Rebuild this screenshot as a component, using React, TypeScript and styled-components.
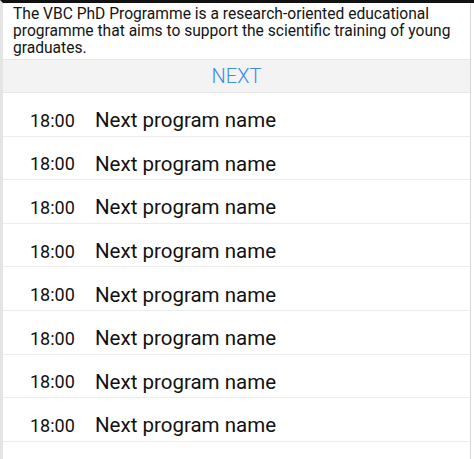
import React from "react";
import styled, { createGlobalStyle } from "styled-components";

const Global = createGlobalStyle`
  html, body { margin: 0; padding: 0; background: #ffffff; }
  body { font-family: Roboto, "Noto Sans", sans-serif; }
`;

const Screen = styled.div`
  width: 474px;
  height: 459px;
  box-sizing: border-box;
  display: flex;
  flex-direction: column;
  background: #ffffff;
  border-top: 3px solid #111111;
  border-left: 3px solid #e4e4e4;
  overflow: hidden;
`;

const Frame = styled.div`
  flex: 1;
  display: flex;
  flex-direction: column;
  margin-right: 3px;
  border-right: 1px solid #d8d8d8;
  min-height: 0;
`;

const Description = styled.p`
  margin: 0;
  padding: 3px 10px 2px 10px;
  font-size: 15.6px;
  line-height: 17px;
  color: #141414;
`;

const NextBar = styled.div`
  height: 34px;
  box-sizing: border-box;
  display: flex;
  align-items: center;
  justify-content: center;
  background: #f3f3f3;
  border-top: 1px solid #e6e6e6;
  border-bottom: 1px solid #e6e6e6;
  color: #3c8de6;
  font-size: 20px;
  font-weight: 300;
`;

const List = styled.div`
  display: flex;
  flex-direction: column;
`;

const Row = styled.div`
  height: 43.6px;
  box-sizing: border-box;
  display: flex;
  align-items: center;
  border-bottom: 1px solid #ececec;
  padding-top: 12px;
`;

const Time = styled.span`
  width: 92px;
  box-sizing: border-box;
  padding-left: 27px;
  font-size: 18px;
  color: #111111;
`;

const Name = styled.span`
  font-size: 20.5px;
  color: #111111;
`;

const items = Array.from({ length: 8 }, () => ({ time: "18:00", name: "Next program name" }));

export default function App() {
  return (
    <>
      <Global />
      <Screen>
        <Frame>
          <Description>
            The VBC PhD Programme is a research-oriented educational programme that aims to support the
            scientific training of young graduates.
          </Description>
          <NextBar>NEXT</NextBar>
          <List>
            {items.map((it, i) => (
              <Row key={i}>
                <Time>{it.time}</Time>
                <Name>{it.name}</Name>
              </Row>
            ))}
          </List>
        </Frame>
      </Screen>
    </>
  );
}
